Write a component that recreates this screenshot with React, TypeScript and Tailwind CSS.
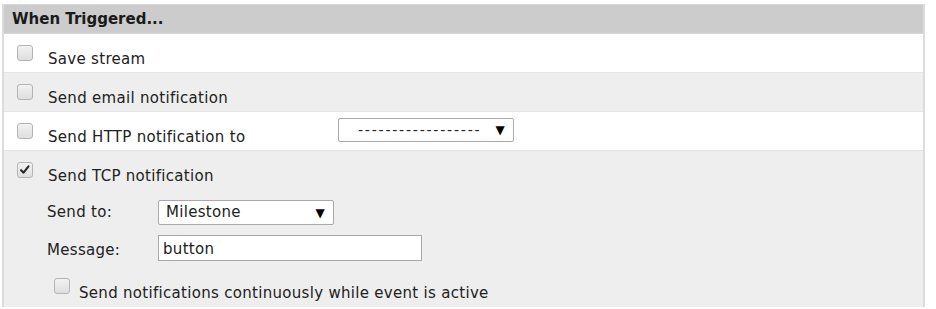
import React from "react";

function Box({ checked = false, className = "" }: { checked?: boolean; className?: string }) {
  return (
    <span
      className={`relative block w-[16px] h-[16px] shrink-0 rounded-[3px] border border-[#b4b4b4] bg-gradient-to-b from-[#f2f2f2] to-[#dedede] ${className}`}
    >
      {checked && (
        <svg viewBox="0 0 16 16" className="absolute left-0 top-0 w-[14px] h-[14px]">
          <path d="M3.5 8.2 L6.4 11 L12 3.8" fill="none" stroke="#2a2a2a" strokeWidth="2.4" strokeLinecap="round" strokeLinejoin="round" />
        </svg>
      )}
    </span>
  );
}

function CheckRow({ label, bg }: { label: string; bg: string }) {
  return (
    <div className={`flex h-[39px] border-b border-[#e4e4e4] ${bg}`}>
      <Box className="mt-[11px] ml-[13px]" />
      <span className="mt-[16px] ml-[15px] leading-[18px]">{label}</span>
    </div>
  );
}

export default function App() {
  return (
    <div
      className="w-[936px] h-[309px] bg-white pt-[4px] text-[15px] tracking-[0.3px] text-[#222]"
      style={{ fontFamily: "'DejaVu Sans', Verdana, sans-serif" }}
    >
      <div className="ml-[2px] w-[923px] border-x-2 border-[#dcdcdc] bg-white">
        <div className="h-[30px] border-y border-[#d8d8d8] bg-[#cccccc] pl-[8px] flex items-center">
          <span className="font-bold text-[15px] tracking-normal text-[#1a1a1a]">When Triggered...</span>
        </div>
        <CheckRow label="Save stream" bg="bg-white" />
        <CheckRow label="Send email notification" bg="bg-[#eeeeee]" />
        <div className="flex h-[39px] border-b border-[#e4e4e4] bg-white">
          <Box className="mt-[11px] ml-[13px]" />
          <span className="mt-[16px] ml-[15px] leading-[18px] w-[290px]">Send HTTP notification to</span>
          <div className="mt-[6px] w-[176px] h-[24px] border border-[#a9a9a9] rounded-[2px] bg-white flex items-center">
            <span className="ml-[19px] tracking-[1.8px] text-[14px] whitespace-nowrap text-[#222]">------------------</span>
            <span className="ml-auto mr-[8px] text-[12px] text-black">▼</span>
          </div>
        </div>
        <div className="bg-[#eeeeee] h-[156px] flex flex-col">
          <div className="flex h-[39px]">
            <Box checked className="mt-[11px] ml-[13px]" />
            <span className="mt-[16px] ml-[15px] leading-[18px]">Send TCP notification</span>
          </div>
          <div className="flex items-center mt-[10px] h-[25px]">
            <span className="ml-[43px] w-[111px]">Send to:</span>
            <div className="w-[176px] h-[25px] border border-[#a9a9a9] rounded-[2px] bg-white flex items-center">
              <span className="ml-[7px]">Milestone</span>
              <span className="ml-auto mr-[8px] text-[12px] text-black">▼</span>
            </div>
          </div>
          <div className="flex items-center mt-[10px] h-[26px]">
            <span className="ml-[43px] w-[111px] pt-[4px]">Message:</span>
            <div className="w-[264px] h-[26px] border border-[#a9a9a9] bg-white flex items-center pt-[3px]">
              <span className="ml-[4px]">button</span>
            </div>
          </div>
          <div className="flex mt-[17px]">
            <Box className="ml-[50px]" />
            <span className="ml-[9px] mt-[6px] leading-[18px]">Send notifications continuously while event is active</span>
          </div>
        </div>
      </div>
    </div>
  );
}
